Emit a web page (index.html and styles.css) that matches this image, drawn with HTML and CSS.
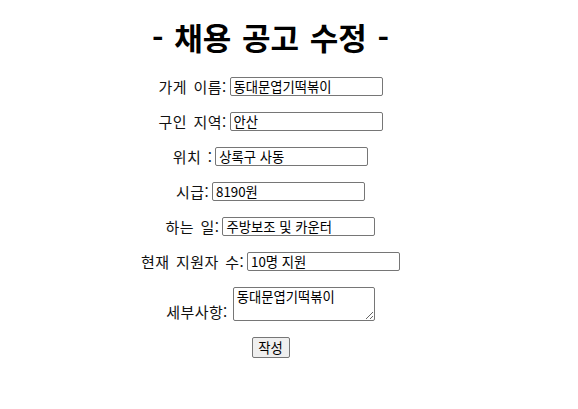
FILE: index.html
```html
<!DOCTYPE html>
<html lang="ko">
<head>
<meta charset="utf-8">
<title>채용 공고 수정</title>
<link rel="stylesheet" href="styles.css">
</head>
<body>
<div class="page">
  <h1 class="title">- 채용 공고 수정 -</h1>
  <form class="form">
    <div class="row"><label class="label">가게 이름:</label><input class="field" type="text" value="동대문엽기떡볶이"></div>
    <div class="row"><label class="label">구인 지역:</label><input class="field" type="text" value="안산"></div>
    <div class="row"><label class="label">위치 :</label><input class="field" type="text" value="상록구 사동"></div>
    <div class="row"><label class="label">시급:</label><input class="field" type="text" value="8190원"></div>
    <div class="row"><label class="label">하는 일:</label><input class="field" type="text" value="주방보조 및 카운터"></div>
    <div class="row"><label class="label">현재 지원자 수:</label><input class="field" type="text" value="10명 지원"></div>
    <div class="row"><label class="label">세부사항:</label><textarea class="area">동대문엽기떡볶이</textarea></div>
    <div class="row"><button class="btn" type="button">작성</button></div>
  </form>
</div>
</body>
</html>
```
FILE: styles.css
```css
body {
  margin: 8px;
  background: #fff;
  color: #000;
  font-family: "Noto Sans CJK KR", "Noto Sans", sans-serif;
}
.page {
  width: 525px;
  text-align: center;
}
.title {
  margin: 0;
  padding-top: 10px;
  font-size: 31px;
  line-height: 38px;
  font-weight: bold;
  word-spacing: 2px;
}
.form {
  margin-top: 21px;
}
.row {
  display: flex;
  justify-content: center;
  align-items: flex-end;
  gap: 3px;
  margin-bottom: 16px;
}
.label {
  font-size: 15px;
  line-height: 19px;
  letter-spacing: 0.4px;
  word-spacing: 2px;
  color: #111;
}
.field {
  box-sizing: border-box;
  width: 153px;
  height: 19px;
  margin: 0;
  padding: 0 3px;
  border: 1px solid #767676;
  border-radius: 2px;
  font-family: "Noto Sans CJK KR", "Noto Sans", sans-serif;
  font-size: 13.33px;
  color: #000;
}
.area {
  box-sizing: border-box;
  width: 142px;
  height: 34px;
  margin: 0 0 0 2px;
  padding: 1px 3px;
  border: 1px solid #767676;
  border-radius: 2px;
  font-family: "Noto Sans CJK KR", "Noto Sans", sans-serif;
  font-size: 13.33px;
  line-height: 15px;
  color: #000;
  resize: both;
}
.btn {
  box-sizing: border-box;
  width: 38px;
  height: 21px;
  margin: 0;
  padding: 0;
  border: 1px solid #767676;
  border-radius: 2px;
  background: #efefef;
  font-family: "Noto Sans CJK KR", "Noto Sans", sans-serif;
  font-size: 13.33px;
  line-height: 19px;
  color: #000;
}
```
